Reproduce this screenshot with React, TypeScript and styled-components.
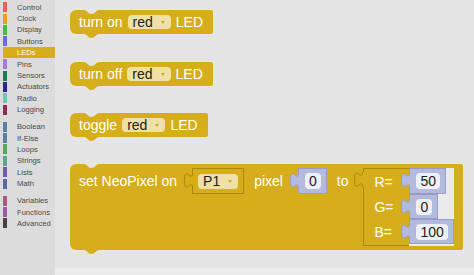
import React from 'react';
import styled, { createGlobalStyle } from 'styled-components';

const GOLD = '#d6ae1b';
const GOLD_EDGE = 'rgba(120, 90, 0, 0.45)';
const WS = '#e5e5e5';
const LAV = '#b4b9de';
const LAV_EDGE = '#979dc8';

const GlobalStyle = createGlobalStyle`
  html, body { margin: 0; padding: 0; }
  body {
    background: ${WS};
    font-family: "Liberation Sans", Arial, sans-serif;
  }
`;

/******************************************************************************/
/* Toolbox */
/******************************************************************************/

const Page = styled.div`
  display: flex;
  width: 474px;
  height: 275px;
  overflow: hidden;
`;

const Toolbox = styled.div`
  width: 55px;
  flex: none;
  background: #dcdcdc;
  padding-top: 1.5px;
  box-sizing: border-box;
`;

const Category = styled.div<{ $color: string; $selected?: boolean }>`
  height: 11.4px;
  display: flex;
  align-items: center;
  margin-left: 3px;
  font-size: 7.6px;
  white-space: nowrap;
  color: ${(p) => (p.$selected ? '#ffffff' : '#4a4a4a')};
  background: ${(p) => (p.$selected ? GOLD : 'transparent')};

  &::before {
    content: '';
    width: 4px;
    height: 10px;
    margin-right: 10px;
    background: ${(p) => p.$color};
  }
`;

const Separator = styled.div`
  height: 5.6px;
`;

type Cat = { name: string; color: string } | 'sep';

const categories: Cat[] = [
  { name: 'Control', color: '#e8625a' },
  { name: 'Clock', color: '#e5a21a' },
  { name: 'Display', color: '#4cb84c' },
  { name: 'Buttons', color: '#6b6be0' },
  { name: 'LEDs', color: GOLD },
  { name: 'Pins', color: '#a679d6' },
  { name: 'Sensors', color: '#1f7a55' },
  { name: 'Actuators', color: '#2c2590' },
  { name: 'Radio', color: '#72c4b6' },
  { name: 'Logging', color: '#8e2d4f' },
  'sep',
  { name: 'Boolean', color: '#5b80a5' },
  { name: 'If-Else', color: '#5b80a5' },
  { name: 'Loops', color: '#5ba55b' },
  { name: 'Strings', color: '#5ba58c' },
  { name: 'Lists', color: '#745ba5' },
  { name: 'Math', color: '#5b67a5' },
  'sep',
  { name: 'Variables', color: '#a55b80' },
  { name: 'Functions', color: '#9a5ba5' },
  { name: 'Advanced', color: '#444444' },
];

/******************************************************************************/
/* Workspace and blocks */
/******************************************************************************/

const Workspace = styled.div`
  position: relative;
  flex: 1;
  background: ${WS};
`;

const HScroll = styled.div`
  position: absolute;
  left: 0;
  right: 0;
  bottom: 0;
  height: 7px;
  background: #ececec;
`;

const Block = styled.div<{ $top: number; $tall?: boolean }>`
  position: absolute;
  left: 15px;
  top: ${(p) => p.$top}px;
  display: flex;
  align-items: ${(p) => (p.$tall ? 'flex-start' : 'center')};
  height: ${(p) => (p.$tall ? 'auto' : '24px')};
  padding: ${(p) => (p.$tall ? '4px 9px' : '0 10px 0 9px')};
  gap: ${(p) => (p.$tall ? '0' : '5px')};
  background: ${GOLD};
  border-radius: 6px 2px 2px 6px;
  color: #ffffff;
  font-size: 14px;
  white-space: nowrap;
`;

const Label = styled.span`
  line-height: 26px;
`;

const NotchSvg = styled.svg<{ $bottom?: boolean }>`
  position: absolute;
  left: 14px;
  ${(p) => (p.$bottom ? 'bottom: -4px;' : 'top: 0;')}
`;

function Notches() {
  const d = 'M0,0 C3,0 4,4 7.5,4 C11,4 12,0 15,0 Z';
  return (
    <>
      <NotchSvg width="15" height="4" viewBox="0 0 15 4">
        <path d={d} fill={WS} />
      </NotchSvg>
      <NotchSvg $bottom width="15" height="4" viewBox="0 0 15 4">
        <path d={d} fill={GOLD} />
      </NotchSvg>
    </>
  );
}

const Dropdown = styled.span<{ $h?: number }>`
  display: inline-flex;
  align-items: center;
  gap: 8px;
  height: ${(p) => p.$h ?? 14}px;
  padding: 0 6px 0 5px;
  background: #efe0a6;
  border-radius: 4px;
  color: #222222;
  font-size: 14px;

  &::after {
    content: '';
    border-left: 2.5px solid transparent;
    border-right: 2.5px solid transparent;
    border-top: 3px solid #c9a53c;
  }
`;

const Slot = styled.div<{ $last?: boolean }>`
  position: relative;
  display: flex;
  margin: 0 ${(p) => (p.$last ? 0 : 10)}px 0 15px;
`;

const TabSvg = styled.svg`
  position: absolute;
  left: -9px;
  top: 4px;
  overflow: visible;
`;

function PuzzleTab({ fill, stroke }: { fill: string; stroke: string }) {
  return (
    <TabSvg width="10" height="16" viewBox="0 0 10 16">
      <path
        d="M10,0 L8.5,0 c0,10 -8,-8 -8,7.5 s8,-2.5 8,7.5 L10,15 Z"
        fill={fill}
      />
      <path
        d="M8.5,0 c0,10 -8,-8 -8,7.5 s8,-2.5 8,7.5"
        fill="none"
        stroke={stroke}
        strokeWidth="1"
      />
    </TabSvg>
  );
}

const ShadowBlock = styled.div`
  position: relative;
  display: flex;
  align-items: center;
  height: 26px;
  box-sizing: border-box;
  padding: 0 5px;
  background: ${GOLD};
  border: 1px solid ${GOLD_EDGE};
`;

const NumberBlock = styled.div<{ $h?: number }>`
  position: relative;
  display: flex;
  align-items: center;
  height: ${(p) => p.$h ?? 26}px;
  box-sizing: border-box;
  padding: 0 5px 0 6px;
  background: ${LAV};
  border: 1px solid ${LAV_EDGE};
`;

const NumField = styled.span`
  display: inline-flex;
  align-items: center;
  height: 16px;
  padding: 0 4px;
  background: #eef0f8;
  border-radius: 4px;
  color: #222222;
  font-size: 14px;
`;

const ColourBlock = styled.div`
  position: relative;
  display: flex;
`;

const ColourLabels = styled.div`
  display: flex;
  flex-direction: column;
  width: 46px;
  box-sizing: border-box;
  padding-left: 10px;
  background: ${GOLD};
  border: 1px solid ${GOLD_EDGE};
  border-right: none;
`;

const ColourLabel = styled.span<{ $h: number }>`
  height: ${(p) => p.$h}px;
  line-height: ${(p) => p.$h}px;
`;

const ColourInputs = styled.div`
  display: flex;
  flex-direction: column;
  align-items: flex-start;
  background: #ebebee;
`;

const rgb = [
  { label: 'R=', value: '50', h: 26 },
  { label: 'G=', value: '0', h: 25 },
  { label: 'B=', value: '100', h: 25 },
];

function LedBlock({ top, verb }: { top: number; verb: string }) {
  return (
    <Block $top={top}>
      <Notches />
      <span>{verb}</span>
      <Dropdown>red</Dropdown>
      <span>LED</span>
    </Block>
  );
}

export default function App() {
  return (
    <>
      <GlobalStyle />
      <Page>
        <Toolbox>
          {categories.map((c, i) =>
            c === 'sep' ? (
              <Separator key={i} />
            ) : (
              <Category key={c.name} $color={c.color} $selected={c.name === 'LEDs'}>
                {c.name}
              </Category>
            )
          )}
        </Toolbox>
        <Workspace>
          <LedBlock top={10} verb="turn on" />
          <LedBlock top={62} verb="turn off" />
          <LedBlock top={113} verb="toggle" />

          <Block $top={164} $tall>
            <Notches />
            <Label>set NeoPixel on</Label>
            <Slot>
              <ShadowBlock>
                <PuzzleTab fill={GOLD} stroke={GOLD_EDGE} />
                <Dropdown $h={15}>P1</Dropdown>
              </ShadowBlock>
            </Slot>
            <Label>pixel</Label>
            <Slot>
              <NumberBlock>
                <PuzzleTab fill={LAV} stroke={LAV_EDGE} />
                <NumField>0</NumField>
              </NumberBlock>
            </Slot>
            <Label>to</Label>
            <Slot $last>
              <ColourBlock>
                <PuzzleTab fill={GOLD} stroke={GOLD_EDGE} />
                <ColourLabels>
                  {rgb.map((r) => (
                    <ColourLabel key={r.label} $h={r.h}>
                      {r.label}
                    </ColourLabel>
                  ))}
                </ColourLabels>
                <ColourInputs>
                  {rgb.map((r) => (
                    <NumberBlock key={r.label} $h={r.h}>
                      <PuzzleTab fill={LAV} stroke={LAV_EDGE} />
                      <NumField>{r.value}</NumField>
                    </NumberBlock>
                  ))}
                </ColourInputs>
              </ColourBlock>
            </Slot>
          </Block>
          <HScroll />
        </Workspace>
      </Page>
    </>
  );
}
